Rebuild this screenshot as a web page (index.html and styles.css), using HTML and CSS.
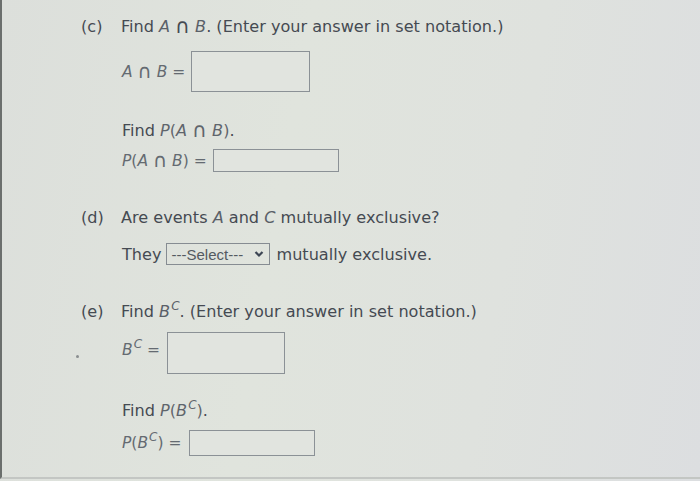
FILE: index.html
```html
<!DOCTYPE html>
<html>
<head>
<meta charset="utf-8">
<link rel="stylesheet" href="styles.css">
</head>
<body>
<main class="page">
  <section class="part">
    <div class="row q"><span class="tag">(c)</span><span class="txt">Find <i class="m">A</i> <span class="cap">∩</span> <i class="m">B</i>. (Enter your answer in set notation.)</span></div>
    <div class="row ans r2"><span class="lbl"><i>A</i> <span class="cap">∩</span> <i>B</i> =</span><span class="box b1"></span></div>
    <div class="row ans r3"><span class="txt">Find <span class="m2"><i>P</i>(<i>A</i> <span class="cap">∩</span> <i>B</i>)</span>.</span></div>
    <div class="row ans r4"><span class="lbl"><i>P</i>(<i>A</i> <span class="cap">∩</span> <i>B</i>) =</span><span class="box b2"></span></div>
  </section>
  <section class="part">
    <div class="row q r5"><span class="tag">(d)</span><span class="txt">Are events <i class="m">A</i> and <i class="m">C</i> mutually exclusive?</span></div>
    <div class="row ans r6"><span class="txt">They</span><span class="sel">---Select---<svg class="chev" width="10" height="8" viewBox="0 0 10 8"><path d="M1.5 2 L5 5.5 L8.5 2" fill="none" stroke="#3d4654" stroke-width="2.2"/></svg></span><span class="txt">mutually exclusive.</span></div>
  </section>
  <section class="part">
    <div class="row q r7"><span class="tag">(e)</span><span class="txt">Find <i class="m sm">B<sup>C</sup></i>. (Enter your answer in set notation.)</span></div>
    <div class="row ans r8"><span class="lbl"><i>B<sup>C</sup></i> =</span><span class="box b3"></span></div>
    <div class="row ans r9"><span class="txt">Find <span class="m2"><i>P</i>(<i>B<sup>C</sup></i>)</span>.</span></div>
    <div class="row ans r10"><span class="lbl"><i>P</i>(<i>B<sup>C</sup></i>) =</span><span class="box b4"></span></div>
  </section>
  <span class="dot"></span>
</main>
</body>
</html>
```

FILE: styles.css
```css
html, body {
  margin: 0;
  padding: 0;
}
body {
  width: 700px;
  height: 481px;
  overflow: hidden;
  background: linear-gradient(100deg, #dcdfdb 0%, #e0e4dd 40%, #dfe2de 70%, #dcdee0 100%);
  font-family: "DejaVu Sans", Verdana, sans-serif;
  font-size: 16.1px;
  color: #454a52;
}
.page {
  position: relative;
  height: 479px;
  border-left: 2px solid #6b6f6d;
  border-bottom: 2px solid #c3c6c3;
  box-sizing: border-box;
  padding: 16px 0 0 79px;
}
.row {
  display: flex;
  align-items: center;
  height: 20px;
  white-space: nowrap;
}
.tag {
  width: 40px;
  flex: none;
}
.ans {
  padding-left: 41px;
}
i {
  font-style: italic;
}
.cap {
  font-size: 1.25em;
  line-height: 0;
  position: relative;
  top: 1px;
}
.m {
  color: #5a6068;
}
.m2 {
  color: #5f656c;
}
.lbl {
  color: #646a71;
  font-size: 15.5px;
  margin-right: 6px;
}
sup {
  font-size: 12px;
  vertical-align: 0;
  position: relative;
  top: -7px;
  margin-left: 1px;
}
.box {
  display: block;
  box-sizing: border-box;
  border: 1.5px solid #8b9196;
  background: #e1e4df;
}
.r2 { margin-top: 15px; height: 41px; }
.b1 { width: 119px; height: 41px; }
.r3 { margin-top: 28px; }
.r4 { margin-top: 9px; height: 23px; }
.b2 { width: 126px; height: 23px; }
.r5 { margin-top: 35px; }
.r6 { margin-top: 16px; height: 22px; }
.sel {
  display: flex;
  align-items: center;
  justify-content: space-between;
  box-sizing: border-box;
  width: 104px;
  height: 22px;
  margin: 0 6px 0 5px;
  padding: 0 5px 0 4px;
  border: 1.5px solid #868c92;
  font-family: "Liberation Sans", Arial, sans-serif;
  font-size: 15px;
  color: #545a61;
}
.chev { flex: none; }
.r7 { margin-top: 36px; }
.r8 { margin-top: 11px; height: 42px; }
.b3 { width: 118px; height: 42px; }
.r8 .lbl { position: relative; top: -3px; margin-right: 7px; }
.r9 { margin-top: 26px; }
.r10 { margin-top: 10px; height: 26px; }
.r10 .lbl { margin-right: 8px; }
.b4 { width: 126px; height: 26px; }
.dot {
  position: absolute;
  left: 74px;
  top: 355px;
  width: 3px;
  height: 3px;
  border-radius: 50%;
  background: #8a8e90;
}
```
